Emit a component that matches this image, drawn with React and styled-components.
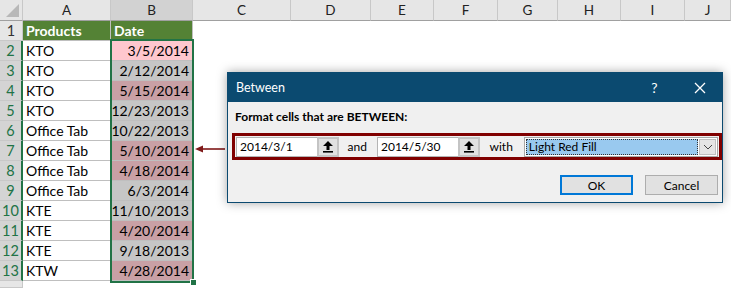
import React from 'react';
import styled, { createGlobalStyle } from 'styled-components';

const GlobalStyle = createGlobalStyle`
    html, body {
        margin: 0;
        padding: 0;
        background: #ffffff;
    }
    body {
        width: 731px;
        height: 288px;
        overflow: hidden;
        font-family: Lato, "Liberation Sans", sans-serif;
    }
`;

const Page = styled.div`
    position: relative;
    width: 731px;
    height: 288px;
    overflow: hidden;
`;

const Sheet = styled.div`
    display: grid;
    grid-template-columns: 23px 88px 82px 98px 80px 63px 64px 60px 63px 64px 46px;
    grid-template-rows: 21px repeat(13, 20px) 7px;
`;

const Corner = styled.div`
    position: relative;
    background: #e6e6e6;
    border-bottom: 1px solid #a0a0a0;
    border-right: 1px solid #c8c8c8;

    &::after {
        content: '';
        position: absolute;
        right: 3px;
        bottom: 3px;
        border-left: 13px solid transparent;
        border-bottom: 13px solid #b8b8b8;
    }
`;

const ColHead = styled.div`
    display: flex;
    justify-content: center;
    align-items: center;
    background: ${p => (p.$active ? '#d2d2d2' : '#e6e6e6')};
    border-bottom: 1px solid #a0a0a0;
    border-right: 1px solid #c8c8c8;
    font-size: 13.5px;
    color: #222;
`;

const RowHead = styled.div`
    display: flex;
    justify-content: center;
    align-items: center;
    background: ${p => (p.$active ? '#d4d4d4' : '#e6e6e6')};
    color: ${p => (p.$active ? '#217346' : '#333')};
    border-bottom: 1px solid #c8c8c8;
    border-right: ${p => (p.$active ? '2px solid #217346' : '1px solid #c8c8c8')};
    font-size: 14.5px;
`;

const Cell = styled.div`
    display: flex;
    align-items: center;
    justify-content: ${p => (p.$right ? 'flex-end' : 'flex-start')};
    padding: 0 3px;
    background: ${p => p.$bg || '#ffffff'};
    color: ${p => (p.$head ? '#ffffff' : '#000000')};
    font-weight: ${p => (p.$head ? 700 : 400)};
    font-size: 14px;
    border-bottom: ${p => (p.$table ? '1px solid #bfbfbf' : 'none')};
    border-right: ${p => (p.$table ? '1px solid #bfbfbf' : 'none')};
    white-space: nowrap;
`;

const Selection = styled.div`
    position: absolute;
    left: 110px;
    top: 39px;
    width: 80px;
    height: 240px;
    border: 2px solid #217346;
    pointer-events: none;

    &::after {
        content: '';
        position: absolute;
        right: -5px;
        bottom: -5px;
        width: 5px;
        height: 5px;
        background: #217346;
        border: 1px solid #ffffff;
    }
`;

const Arrow = styled.svg`
    position: absolute;
    left: 194px;
    top: 144px;
`;

const Dialog = styled.div`
    position: absolute;
    left: 227px;
    top: 72px;
    width: 496px;
    height: 131px;
    display: flex;
    flex-direction: column;
    background: #f0f0f0;
    border: 1px solid #0b4a70;
    box-sizing: border-box;
    box-shadow: 0 0 10px rgba(0, 0, 0, 0.35);
    font-family: Lato, "Open Sans", sans-serif;
    font-size: 12px;
    color: #000;
`;

const TitleBar = styled.div`
    display: flex;
    align-items: center;
    height: 29px;
    padding-left: 8px;
    background: #0b4a70;
    color: #ffffff;
    font-size: 12.5px;
`;

const Title = styled.span`
    flex: 1;
`;

const TitleButton = styled.span`
    display: flex;
    justify-content: center;
    align-items: center;
    width: 45px;
    font-size: 14px;
`;

const Body = styled.div`
    display: flex;
    flex-direction: column;
    padding: 0 0 0 4px;
`;

const Caption = styled.div`
    margin: 7px 0 0 3px;
    font-weight: 700;
    font-size: 12px;
`;

const Frame = styled.div`
    display: flex;
    align-items: center;
    height: 21px;
    margin: 9px 0 0 0;
    padding: 0 1px 0 1px;
    border: 3px solid #800000;
`;

const Field = styled.div`
    display: flex;
    align-items: center;
    width: ${p => p.$w}px;
    height: 20px;
    box-sizing: border-box;
    padding-left: 3px;
    background: #ffffff;
    border: 1px solid #b4b4b4;
    border-right: none;
`;

const RefButton = styled.div`
    display: flex;
    justify-content: center;
    align-items: center;
    width: 22px;
    height: 20px;
    box-sizing: border-box;
    background: #e1e1e1;
    border: 2px solid #c4c4c4;
`;

const Word = styled.span`
    margin: 0 ${p => p.$mr}px 0 ${p => p.$ml}px;
`;

const Select = styled.div`
    display: flex;
    align-items: center;
    width: 195px;
    height: 20px;
    box-sizing: border-box;
    padding: 1px;
    background: #ffffff;
    border: 1px solid #a8a8a8;
`;

const SelectValue = styled.div`
    flex: 1;
    height: 100%;
    box-sizing: border-box;
    display: flex;
    align-items: center;
    padding-left: 2px;
    background: #99c9ef;
    border: 1px dotted #333;
`;

const DropButton = styled.div`
    display: flex;
    justify-content: center;
    align-items: center;
    width: 17px;
    height: 100%;
    box-sizing: border-box;
    margin-left: 1px;
    background: #e5e5e5;
    border: 1px solid #c0c0c0;
`;

const Buttons = styled.div`
    display: flex;
    justify-content: flex-end;
    gap: 12px;
    margin: 15px 4px 0 0;
`;

const Button = styled.div`
    display: flex;
    justify-content: center;
    align-items: center;
    width: 73px;
    height: 20px;
    box-sizing: border-box;
    background: #e1e1e1;
    border: ${p => (p.$primary ? '2px solid #0078d7' : '1px solid #adadad')};
`;

const rows = [
    ['KTO', '3/5/2014', '#ffc7ce'],
    ['KTO', '2/12/2014', '#c6c6c6'],
    ['KTO', '5/15/2014', '#c9a0a5'],
    ['KTO', '12/23/2013', '#c6c6c6'],
    ['Office Tab', '10/22/2013', '#c6c6c6'],
    ['Office Tab', '5/10/2014', '#c9a0a5'],
    ['Office Tab', '4/18/2014', '#c9a0a5'],
    ['Office Tab', '6/3/2014', '#c6c6c6'],
    ['KTE', '11/10/2013', '#c6c6c6'],
    ['KTE', '4/20/2014', '#c9a0a5'],
    ['KTE', '9/18/2013', '#c6c6c6'],
    ['KTW', '4/28/2014', '#c9a0a5'],
];

const letters = ['A', 'B', 'C', 'D', 'E', 'F', 'G', 'H', 'I', 'J'];

function RefIcon() {
    return (
        <svg width="12" height="13" viewBox="0 0 12 13">
            <path d="M6 1 L11 6 L7.5 6 L7.5 10 L4.5 10 L4.5 6 L1 6 Z" fill="#000" />
            <rect x="1" y="11" width="10" height="1.6" fill="#000" />
        </svg>
    );
}

function EmptyCells({ row }) {
    return letters.slice(2).map(l => <Cell key={l + row} />);
}

function App() {
    return (
        <Page>
            <GlobalStyle />
            <Sheet>
                <Corner />
                {letters.map(l => (
                    <ColHead key={l} $active={l === 'B'}>{l}</ColHead>
                ))}

                <RowHead>1</RowHead>
                <Cell $head $table $bg="#548235">Products</Cell>
                <Cell $head $table $bg="#548235">Date</Cell>
                <EmptyCells row={1} />

                {rows.map((r, i) => (
                    <React.Fragment key={i}>
                        <RowHead $active>{i + 2}</RowHead>
                        <Cell $table>{r[0]}</Cell>
                        <Cell $table $right $bg={r[2]}>{r[1]}</Cell>
                        <EmptyCells row={i + 2} />
                    </React.Fragment>
                ))}

                <RowHead />
            </Sheet>

            <Selection />

            <Arrow width="32" height="10" viewBox="0 0 32 10">
                <path d="M1 5 L9 1.5 L9 8.5 Z" fill="#7f1a1a" />
                <rect x="8" y="4.2" width="23" height="1.6" fill="#7f1a1a" />
            </Arrow>

            <Dialog>
                <TitleBar>
                    <Title>Between</Title>
                    <TitleButton>?</TitleButton>
                    <TitleButton>
                        <svg width="12" height="12" viewBox="0 0 12 12">
                            <path d="M1 1 L11 11 M11 1 L1 11" stroke="#fff" strokeWidth="1.3" />
                        </svg>
                    </TitleButton>
                </TitleBar>
                <Body>
                    <Caption>Format cells that are BETWEEN:</Caption>
                    <Frame>
                        <Field $w={81}>2014/3/1</Field>
                        <RefButton><RefIcon /></RefButton>
                        <Word $ml={9} $mr={10}>and</Word>
                        <Field $w={81}>2014/5/30</Field>
                        <RefButton><RefIcon /></RefButton>
                        <Word $ml={10} $mr={11}>with</Word>
                        <Select>
                            <SelectValue>Light Red Fill</SelectValue>
                            <DropButton>
                                <svg width="10" height="6" viewBox="0 0 10 6">
                                    <path d="M1 1 L5 5 L9 1" stroke="#444" strokeWidth="1" fill="none" />
                                </svg>
                            </DropButton>
                        </Select>
                    </Frame>
                    <Buttons>
                        <Button $primary>OK</Button>
                        <Button>Cancel</Button>
                    </Buttons>
                </Body>
            </Dialog>
        </Page>
    );
}

export default App;
